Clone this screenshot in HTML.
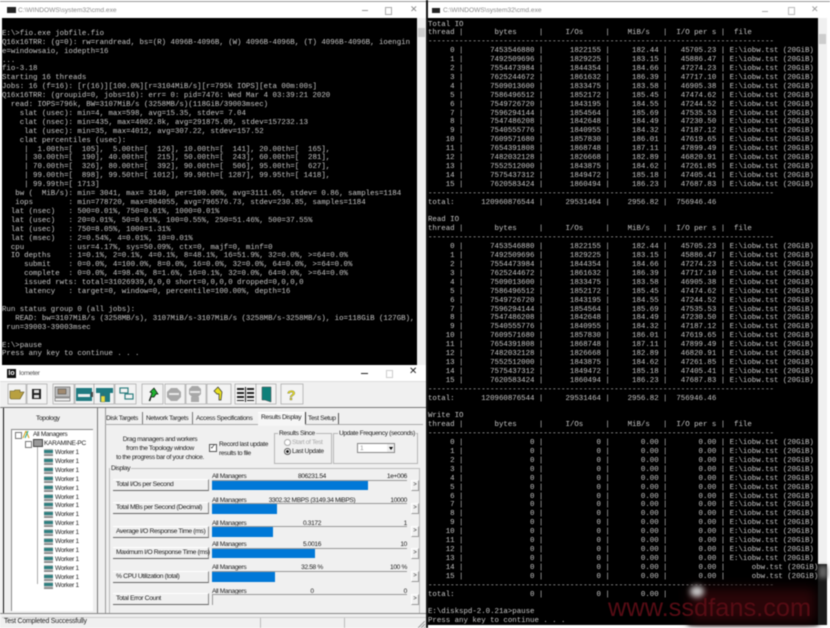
<!DOCTYPE html>
<html><head><meta charset="utf-8"><style>
html,body{margin:0;padding:0;background:#fff}
#w{position:relative;width:830px;height:628px;overflow:hidden;background:#fff;filter:blur(.4px);font-family:"Liberation Sans",sans-serif}
.a{position:absolute}
pre{position:absolute;margin:0;font:7.4px/8.9px "Liberation Mono",monospace;color:#c8c8c8;white-space:pre}
.t{position:absolute;font-size:7.2px;line-height:9px;color:#222;white-space:pre;letter-spacing:-.35px}
.btn{position:absolute;left:113px;width:96px;height:12px;padding-left:3px;background:#f0f0f0;border-bottom:1px solid #666;border-right:1px solid #888;border-top:1px solid #fff;box-sizing:border-box;font-size:6.8px;letter-spacing:-.38px;line-height:10px;color:#222;text-align:left;white-space:pre}
.bar{position:absolute;left:212px;width:195px;height:10px;background:#f0f0f0;border-top:1px solid #999;box-sizing:border-box}
.fill{position:absolute;left:212px;height:10px;background:#0078d7}
.sb{position:absolute;left:411px;width:8px;height:11px;background:#f0f0f0;border:1px solid #999;border-top-color:#fff;border-left-color:#fff;box-sizing:border-box;font-size:6px;line-height:9px;text-align:center;color:#333}
.ic{position:absolute;left:44px;width:9px;height:7px;background:linear-gradient(#bbb 0,#bbb 1px,#2f7f80 1px,#2f7f80 4px,#ccc 4px,#777 7px)}
.wk{position:absolute;left:55px;font-size:6.5px;letter-spacing:-.3px;line-height:9px;color:#222;white-space:pre}
.gb{position:absolute;border:1px solid #b5b5b5;box-sizing:border-box}
</style></head><body><div id="w">

<!-- left console -->
<div class="a" style="left:0;top:1px;width:426px;height:17px;background:#fff;border-top:1px solid #999"></div>
<div class="a" style="left:7px;top:7px;width:9px;height:6px;background:#222"></div>
<div class="t" style="left:18px;top:6px;color:#8a8a8a;font-size:6.6px;letter-spacing:0">C:\WINDOWS\system32\cmd.exe</div>
<div class="a" style="left:362px;top:10px;width:6px;height:1px;background:#999"></div>
<div class="a" style="left:385px;top:7px;width:5px;height:6px;border:1px solid #aaa"></div>
<div class="t" style="left:410px;top:5px;color:#888;font-size:9px">✕</div>
<div class="a" style="left:2px;top:18px;width:415px;height:347px;background:#000"></div>
<div class="a" style="left:417px;top:18px;width:9px;height:347px;background:#f0f0f0"></div>
<div class="a" style="left:418px;top:28px;width:7px;height:9px;background:#cdcdcd"></div>
<pre style="left:2px;top:29.8px">E:\&gt;fio.exe jobfile.fio
Q16x16TRR: (g=0): rw=randread, bs=(R) 4096B-4096B, (W) 4096B-4096B, (T) 4096B-4096B, ioengin
e=windowsaio, iodepth=16
...
fio-3.18
Starting 16 threads
Jobs: 16 (f=16): [r(16)][100.0%][r=3104MiB/s][r=795k IOPS][eta 00m:00s]
Q16x16TRR: (groupid=0, jobs=16): err= 0: pid=7476: Wed Mar 4 03:39:21 2020
  read: IOPS=796k, BW=3107MiB/s (3258MB/s)(118GiB/39003msec)
    slat (usec): min=4, max=598, avg=15.35, stdev= 7.04
    clat (nsec): min=435, max=4002.8k, avg=291875.09, stdev=157232.13
     lat (usec): min=35, max=4012, avg=307.22, stdev=157.52
    clat percentiles (usec):
     |  1.00th=[  105],  5.00th=[  126], 10.00th=[  141], 20.00th=[  165],
     | 30.00th=[  190], 40.00th=[  215], 50.00th=[  243], 60.00th=[  281],
     | 70.00th=[  326], 80.00th=[  392], 90.00th=[  506], 95.00th=[  627],
     | 99.00th=[  898], 99.50th=[ 1012], 99.90th=[ 1287], 99.95th=[ 1418],
     | 99.99th=[ 1713]
   bw (  MiB/s): min= 3041, max= 3140, per=100.00%, avg=3111.65, stdev= 0.86, samples=1184
   iops        : min=778720, max=804055, avg=796576.73, stdev=230.85, samples=1184
  lat (nsec)   : 500=0.01%, 750=0.01%, 1000=0.01%
  lat (usec)   : 20=0.01%, 50=0.01%, 100=0.55%, 250=51.46%, 500=37.55%
  lat (usec)   : 750=8.05%, 1000=1.31%
  lat (msec)   : 2=0.54%, 4=0.01%, 10=0.01%
  cpu          : usr=4.17%, sys=50.09%, ctx=0, majf=0, minf=0
  IO depths    : 1=0.1%, 2=0.1%, 4=0.1%, 8=48.1%, 16=51.9%, 32=0.0%, &gt;=64=0.0%
     submit    : 0=0.0%, 4=100.0%, 8=0.0%, 16=0.0%, 32=0.0%, 64=0.0%, &gt;=64=0.0%
     complete  : 0=0.0%, 4=98.4%, 8=1.6%, 16=0.1%, 32=0.0%, 64=0.0%, &gt;=64=0.0%
     issued rwts: total=31026939,0,0,0 short=0,0,0,0 dropped=0,0,0,0
     latency   : target=0, window=0, percentile=100.00%, depth=16

Run status group 0 (all jobs):
   READ: bw=3107MiB/s (3258MB/s), 3107MiB/s-3107MiB/s (3258MB/s-3258MB/s), io=118GiB (127GB),
 run=39003-39003msec

E:\&gt;pause
Press any key to continue . . .</pre>

<!-- gap -->
<div class="a" style="left:426px;top:0;width:2px;height:628px;background:#111"></div>

<!-- right console -->
<div class="a" style="left:428px;top:1px;width:402px;height:17px;background:#fff;border-top:1px solid #999"></div>
<div class="a" style="left:432px;top:8px;width:8px;height:5px;background:#222"></div>
<div class="t" style="left:443px;top:6px;color:#8a8a8a;font-size:6.6px;letter-spacing:0">C:\WINDOWS\system32\cmd.exe</div>
<div class="a" style="left:762px;top:11px;width:6px;height:1px;background:#aaa"></div>
<div class="a" style="left:788px;top:7px;width:5px;height:6px;border:1px solid #bbb"></div>
<div class="t" style="left:811px;top:5px;color:#999;font-size:9px">✕</div>
<div class="a" style="left:428px;top:18px;width:390px;height:607px;background:#000"></div>
<div class="a" style="left:818px;top:18px;width:9px;height:607px;background:#f0f0f0"></div>
<div class="a" style="left:819px;top:34px;width:7px;height:10px;background:#cdcdcd"></div>
<pre style="left:428px;top:20.5px">Total IO
thread |       bytes     |     I/Os     |    MiB/s   |  I/O per s |  file
------------------------------------------------------------------------------
     0 |      7453546880 |      1822155 |     182.44 |   45705.23 | E:\iobw.tst (20GiB)
     1 |      7492509696 |      1829225 |     183.15 |   45886.47 | E:\iobw.tst (20GiB)
     2 |      7554473984 |      1844354 |     184.66 |   47274.23 | E:\iobw.tst (20GiB)
     3 |      7625244672 |      1861632 |     186.39 |   47717.10 | E:\iobw.tst (20GiB)
     4 |      7509013600 |      1833475 |     183.58 |   46905.38 | E:\iobw.tst (20GiB)
     5 |      7586496512 |      1852172 |     185.45 |   47474.62 | E:\iobw.tst (20GiB)
     6 |      7549726720 |      1843195 |     184.55 |   47244.52 | E:\iobw.tst (20GiB)
     7 |      7596294144 |      1854564 |     185.69 |   47535.53 | E:\iobw.tst (20GiB)
     8 |      7547486208 |      1842648 |     184.49 |   47230.50 | E:\iobw.tst (20GiB)
     9 |      7540555776 |      1840955 |     184.32 |   47187.12 | E:\iobw.tst (20GiB)
    10 |      7609571680 |      1857830 |     186.01 |   47619.65 | E:\iobw.tst (20GiB)
    11 |      7654391808 |      1868748 |     187.11 |   47899.49 | E:\iobw.tst (20GiB)
    12 |      7482032128 |      1826668 |     182.89 |   46820.91 | E:\iobw.tst (20GiB)
    13 |      7552512000 |      1843875 |     184.62 |   47261.85 | E:\iobw.tst (20GiB)
    14 |      7575437312 |      1849472 |     185.18 |   47405.41 | E:\iobw.tst (20GiB)
    15 |      7620583424 |      1860494 |     186.23 |   47687.83 | E:\iobw.tst (20GiB)
------------------------------------------------------------------------------
total:      120960876544 |     29531464 |    2956.82 |  756946.46

Read IO
thread |       bytes     |     I/Os     |    MiB/s   |  I/O per s |  file
------------------------------------------------------------------------------
     0 |      7453546880 |      1822155 |     182.44 |   45705.23 | E:\iobw.tst (20GiB)
     1 |      7492509696 |      1829225 |     183.15 |   45886.47 | E:\iobw.tst (20GiB)
     2 |      7554473984 |      1844354 |     184.66 |   47274.23 | E:\iobw.tst (20GiB)
     3 |      7625244672 |      1861632 |     186.39 |   47717.10 | E:\iobw.tst (20GiB)
     4 |      7509013600 |      1833475 |     183.58 |   46905.38 | E:\iobw.tst (20GiB)
     5 |      7586496512 |      1852172 |     185.45 |   47474.62 | E:\iobw.tst (20GiB)
     6 |      7549726720 |      1843195 |     184.55 |   47244.52 | E:\iobw.tst (20GiB)
     7 |      7596294144 |      1854564 |     185.69 |   47535.53 | E:\iobw.tst (20GiB)
     8 |      7547486208 |      1842648 |     184.49 |   47230.50 | E:\iobw.tst (20GiB)
     9 |      7540555776 |      1840955 |     184.32 |   47187.12 | E:\iobw.tst (20GiB)
    10 |      7609571680 |      1857830 |     186.01 |   47619.65 | E:\iobw.tst (20GiB)
    11 |      7654391808 |      1868748 |     187.11 |   47899.49 | E:\iobw.tst (20GiB)
    12 |      7482032128 |      1826668 |     182.89 |   46820.91 | E:\iobw.tst (20GiB)
    13 |      7552512000 |      1843875 |     184.62 |   47261.85 | E:\iobw.tst (20GiB)
    14 |      7575437312 |      1849472 |     185.18 |   47405.41 | E:\iobw.tst (20GiB)
    15 |      7620583424 |      1860494 |     186.23 |   47687.83 | E:\iobw.tst (20GiB)
------------------------------------------------------------------------------
total:      120960876544 |     29531464 |    2956.82 |  756946.46

Write IO
thread |       bytes     |     I/Os     |    MiB/s   |  I/O per s |  file
------------------------------------------------------------------------------
     0 |               0 |            0 |       0.00 |       0.00 | E:\iobw.tst (20GiB)
     1 |               0 |            0 |       0.00 |       0.00 | E:\iobw.tst (20GiB)
     2 |               0 |            0 |       0.00 |       0.00 | E:\iobw.tst (20GiB)
     3 |               0 |            0 |       0.00 |       0.00 | E:\iobw.tst (20GiB)
     4 |               0 |            0 |       0.00 |       0.00 | E:\iobw.tst (20GiB)
     5 |               0 |            0 |       0.00 |       0.00 | E:\iobw.tst (20GiB)
     6 |               0 |            0 |       0.00 |       0.00 | E:\iobw.tst (20GiB)
     7 |               0 |            0 |       0.00 |       0.00 | E:\iobw.tst (20GiB)
     8 |               0 |            0 |       0.00 |       0.00 | E:\iobw.tst (20GiB)
     9 |               0 |            0 |       0.00 |       0.00 | E:\iobw.tst (20GiB)
    10 |               0 |            0 |       0.00 |       0.00 | E:\iobw.tst (20GiB)
    11 |               0 |            0 |       0.00 |       0.00 | E:\iobw.tst (20GiB)
    12 |               0 |            0 |       0.00 |       0.00 | E:\iobw.tst (20GiB)
    13 |               0 |            0 |       0.00 |       0.00 | E:\iobw.tst (20GiB)
    14 |               0 |            0 |       0.00 |       0.00 |      obw.tst (20GiB)
    15 |               0 |            0 |       0.00 |       0.00 |      obw.tst (20GiB)
------------------------------------------------------------------------------
total:                 0 |            0 |       0.00 |

E:\diskspd-2.0.21a&gt;pause
Press any key to continue . . .</pre>

<!-- watermark smudge -->
<div class="a" style="left:688px;top:586px;width:130px;height:39px;background:#000;filter:blur(2px)"></div>
<div class="a" style="left:690px;top:589px;width:125px;height:33px;background:#2a0508;filter:blur(6px)"></div>
<div class="a" style="left:690px;top:586px;width:14px;height:11px;background:#ccc;border-radius:50%;filter:blur(3px)"></div>
<div class="a" style="left:818px;top:564px;width:9px;height:61px;background:#1a1a1a"></div>
<div class="a" style="left:819px;top:566px;width:8px;height:12px;background:#666;filter:blur(2px)"></div>
<div class="a" style="left:608px;top:594px;font:25.4px/28px 'Liberation Sans',sans-serif;color:#560c14;white-space:pre">www.ssdfans.com</div>

<!-- Iometer -->
<div class="a" style="left:0;top:365px;width:426px;height:263px;background:#f0f0f0"></div>
<div class="a" style="left:0;top:365px;width:426px;height:17px;background:#fff"></div>
<div class="a" style="left:7px;top:369px;width:9px;height:9px;background:#111;color:#fff;font:bold 7px/9px 'Liberation Sans',sans-serif;text-align:center">Io</div>
<div class="t" style="left:19px;top:369px;color:#555;font-size:6.8px">Iometer</div>
<div class="a" style="left:361px;top:373px;width:7px;height:1px;background:#222"></div>
<div class="a" style="left:386px;top:370px;width:5px;height:6px;border:1px solid #ccc"></div>
<div class="t" style="left:409px;top:367px;color:#222;font-size:10px">✕</div>
<div class="a" style="left:0;top:381px;width:426px;height:1px;background:#ddd"></div>

<svg class="a" style="left:0;top:382px" width="426" height="26" viewBox="0 382 426 26">
<g fill="#f3f3f3" stroke="#999" stroke-width=".6">
<rect x="8" y="384" width="18" height="20"/><rect x="27" y="384" width="20" height="20"/><rect x="53" y="384" width="21" height="20"/><rect x="75" y="384" width="19" height="20"/><rect x="94" y="384" width="20" height="20"/><rect x="115" y="384" width="21" height="20"/><rect x="142" y="384" width="21" height="20"/><rect x="165" y="384" width="20" height="20"/><rect x="186" y="384" width="20" height="20"/><rect x="207" y="384" width="24" height="20"/><rect x="235" y="384" width="21" height="20"/><rect x="256" y="384" width="20" height="20"/><rect x="281" y="384" width="22" height="20"/></g>
<path d="M10 398V391h4l1-1h5v2h4l-4 7H11z" fill="#b8a040" stroke="#5a5020" stroke-width=".6"/>
<path d="M32 389h9v10h-9z" fill="#222"/><path d="M34 390h5v3h-5zM34 395h5v3h-5z" fill="#ddd"/>
<rect x="55" y="387" width="15" height="10" fill="#bbb" stroke="#666" stroke-width=".7"/><rect x="58" y="389" width="8" height="5" fill="#a08a70" stroke="#444" stroke-width=".5"/><rect x="55" y="398" width="15" height="3" fill="#eee" stroke="#555" stroke-width=".6"/>
<rect x="76" y="388" width="16" height="13" fill="#1f7a80"/><rect x="78" y="394" width="12" height="3" fill="#eee"/><rect x="91" y="392" width="2" height="5" fill="#444"/>
<rect x="96" y="388" width="17" height="5" fill="#1f7a80"/><rect x="100" y="393" width="10" height="9" fill="#1f7a80"/><path d="M103 393v3h-2v6h4v-6h-2" fill="#e8e040" stroke="#555" stroke-width=".4"/>
<g fill="none" stroke="#2f7f80" stroke-width="1.2"><rect x="120" y="388" width="8" height="5"/><rect x="125" y="394" width="8" height="5"/></g>
<path d="M149 401l3-8-2-1 4-4 4 6-2 0-2 3-3 0-1 4" fill="#1fb030" stroke="#111" stroke-width=".7"/>
<path d="M171 388h6l4 4v5l-4 4h-6l-4-4v-5z" fill="#a8a8a8"/><rect x="169" y="393" width="10" height="2" fill="#e8e8e8"/>
<path d="M192 386h6l3 3v5l-3 3h-6l-3-3v-5z" fill="#a8a8a8"/><rect x="190" y="391" width="10" height="2" fill="#e8e8e8"/><rect x="191" y="397" width="8" height="5" fill="#aaa"/>
<path d="M214 391l4-4 4 5-1 8h-2l0-6-2 0z" fill="#e8e020" stroke="#333" stroke-width=".7"/>
<g fill="#222"><rect x="237" y="388" width="7" height="2"/><rect x="237" y="392" width="7" height="2"/><rect x="237" y="396" width="7" height="2"/><rect x="237" y="400" width="7" height="1"/><rect x="247" y="388" width="7" height="2"/><rect x="247" y="392" width="7" height="2"/><rect x="247" y="396" width="7" height="2"/><rect x="247" y="400" width="7" height="1"/><rect x="245" y="387" width="1" height="15"/></g>
<path d="M262 387h9v15l-6-2h-3z" fill="#0e7f7a" stroke="#444" stroke-width=".5"/>
<text x="287" y="400" font-family="Liberation Sans" font-weight="bold" font-size="14" fill="#e8e020" stroke="#444" stroke-width=".3">?</text>
</svg>
<div class="a" style="left:0;top:407px;width:426px;height:1px;background:#777"></div>
<div class="a" style="left:3px;top:408px;width:1px;height:205px;background:#111"></div>
<div class="a" style="left:97px;top:408px;width:1px;height:205px;background:#777"></div>
<div class="a" style="left:105px;top:408px;width:1px;height:205px;background:#999"></div>
<div class="t" style="left:36px;top:414px;font-size:6.6px">Topology</div>

<!-- tree -->
<div class="a" style="left:11px;top:429px;width:82px;height:182px;background:#fff;border-left:1px solid #888;border-top:1px solid #888;box-sizing:border-box"></div>
<div class="a" style="left:15px;top:432px;width:5px;height:5px;border:1px solid #777"></div>
<svg class="a" style="left:22px;top:430px" width="10" height="9"><path d="M1 8L4 1M4 1L7 8" stroke="#d0a020" fill="none"/><path d="M3 8L6 1" stroke="#2a8" fill="none"/></svg>
<div class="wk" style="left:33px;top:430px">All Managers</div>
<div class="a" style="left:25px;top:441px;width:5px;height:5px;border:1px solid #777"></div>
<div class="a" style="left:33px;top:439px;width:8px;height:6px;background:#999;border:1px solid #444"></div>
<div class="wk" style="left:44px;top:439px">KARAMINE-PC</div>
<div class="a" style="left:37px;top:447px;width:1px;height:137px;background:#aaa"></div>
<div class="ic" style="top:449px"></div><div class="wk" style="top:448px">Worker 1</div>
<div class="ic" style="top:458px"></div><div class="wk" style="top:457px">Worker 1</div>
<div class="ic" style="top:467px"></div><div class="wk" style="top:466px">Worker 1</div>
<div class="ic" style="top:476px"></div><div class="wk" style="top:475px">Worker 1</div>
<div class="ic" style="top:485px"></div><div class="wk" style="top:484px">Worker 1</div>
<div class="ic" style="top:494px"></div><div class="wk" style="top:493px">Worker 1</div>
<div class="ic" style="top:502px"></div><div class="wk" style="top:501px">Worker 1</div>
<div class="ic" style="top:511px"></div><div class="wk" style="top:510px">Worker 1</div>
<div class="ic" style="top:520px"></div><div class="wk" style="top:519px">Worker 1</div>
<div class="ic" style="top:529px"></div><div class="wk" style="top:528px">Worker 1</div>
<div class="ic" style="top:538px"></div><div class="wk" style="top:537px">Worker 1</div>
<div class="ic" style="top:547px"></div><div class="wk" style="top:546px">Worker 1</div>
<div class="ic" style="top:556px"></div><div class="wk" style="top:555px">Worker 1</div>
<div class="ic" style="top:565px"></div><div class="wk" style="top:564px">Worker 1</div>
<div class="ic" style="top:574px"></div><div class="wk" style="top:573px">Worker 1</div>
<div class="ic" style="top:582px"></div><div class="wk" style="top:581px">Worker 1</div>

<!-- tabs -->
<div class="t" style="left:106px;top:414px;font-size:6.6px">Disk Targets</div>
<div class="a" style="left:142px;top:412px;width:1px;height:12px;background:#777"></div>
<div class="t" style="left:146px;top:414px;font-size:6.6px">Network Targets</div>
<div class="a" style="left:192px;top:412px;width:1px;height:12px;background:#777"></div>
<div class="t" style="left:196px;top:414px;font-size:6.6px">Access Specifications</div>
<div class="a" style="left:258px;top:412px;width:47px;height:13px;background:#f6f6f6;border-top:1px solid #fff"></div>
<div class="t" style="left:261px;top:413px;font-size:6.6px">Results Display</div>
<div class="a" style="left:305px;top:412px;width:1px;height:12px;background:#333"></div>
<div class="t" style="left:308px;top:414px;font-size:6.6px">Test Setup</div>
<div class="a" style="left:338px;top:413px;width:1px;height:11px;background:#555"></div>
<div class="a" style="left:105px;top:424px;width:153px;height:1px;background:#aaa"></div>
<div class="a" style="left:305px;top:424px;width:118px;height:1px;background:#aaa"></div>

<div class="t" style="left:112px;top:435px;width:96px;text-align:center;font-size:6.6px">Drag managers and workers
from the Topology window
to the progress bar of your choice.</div>
<div class="a" style="left:209px;top:444px;width:6px;height:6px;background:#fff;border:1px solid #555"></div>
<div class="t" style="left:210px;top:443px;font-size:7px">✓</div>
<div class="t" style="left:219px;top:440px;font-size:6.6px">Record last update
results to file</div>
<div class="gb" style="left:274px;top:433px;width:58px;height:31px"></div>
<div class="t" style="left:278px;top:429px;background:#f0f0f0;font-size:6.6px;padding:0 1px">Results Since</div>
<div class="a" style="left:284px;top:439px;width:5px;height:5px;border:1px solid #aaa;border-radius:50%;background:#fff"></div>
<div class="t" style="left:292px;top:438px;color:#aaa;font-size:6.6px">Start of Test</div>
<div class="a" style="left:284px;top:448px;width:5px;height:5px;border:1px solid #555;border-radius:50%;background:radial-gradient(#111 35%,#fff 45%)"></div>
<div class="t" style="left:292px;top:447px;font-size:6.6px">Last Update</div>
<div class="gb" style="left:333px;top:433px;width:85px;height:31px"></div>
<div class="t" style="left:338px;top:429px;background:#f0f0f0;font-size:6.6px;padding:0 1px">Update Frequency (seconds)</div>
<div class="a" style="left:357px;top:443px;width:38px;height:10px;background:#fff;border:1px solid #888;box-sizing:border-box"></div>
<div class="t" style="left:360px;top:444px;color:#999;font-size:6.6px">1</div>
<div class="a" style="left:387px;top:444px;width:7px;height:8px;background:#eee"></div>
<div class="a" style="left:389px;top:447px;width:0;height:0;border:2px solid transparent;border-top:3px solid #000"></div>

<!-- display -->
<div class="a" style="left:109px;top:468px;width:311px;height:145px;border:1px solid #bbb;border-bottom:0;box-sizing:border-box"></div>
<div class="t" style="left:110px;top:464px;background:#f0f0f0;font-size:6.6px;padding:0 1px">Display</div>

<div class="btn" style="top:479px">Total I/Os per Second</div>
<div class="btn" style="top:502px">Total MBs per Second (Decimal)</div>
<div class="btn" style="top:526px">Average I/O Response Time (ms)</div>
<div class="btn" style="top:547px">Maximum I/O Response Time (ms)</div>
<div class="btn" style="top:571px">% CPU Utilization (total)</div>
<div class="btn" style="top:593px">Total Error Count</div>

<div class="t" style="left:212px;top:472px;font-size:6.6px">All Managers</div>
<div class="t" style="left:212px;top:496px;font-size:6.6px">All Managers</div>
<div class="t" style="left:212px;top:519px;font-size:6.6px">All Managers</div>
<div class="t" style="left:212px;top:540px;font-size:6.6px">All Managers</div>
<div class="t" style="left:212px;top:563px;font-size:6.6px">All Managers</div>
<div class="t" style="left:212px;top:587px;font-size:6.6px">All Managers</div>

<div class="t" style="left:262px;width:100px;text-align:center;top:472px;font-size:6.6px">806231.54</div>
<div class="t" style="left:262px;width:100px;text-align:center;top:496px;font-size:6.6px">3302.32 MBPS (3149.34 MiBPS)</div>
<div class="t" style="left:262px;width:100px;text-align:center;top:519px;font-size:6.6px">0.3172</div>
<div class="t" style="left:262px;width:100px;text-align:center;top:540px;font-size:6.6px">5.0016</div>
<div class="t" style="left:262px;width:100px;text-align:center;top:563px;font-size:6.6px">32.58 %</div>
<div class="t" style="left:262px;width:100px;text-align:center;top:587px;font-size:6.6px">0</div>

<div class="t" style="left:367px;width:40px;text-align:right;top:472px;font-size:6.6px">1e+006</div>
<div class="t" style="left:367px;width:40px;text-align:right;top:496px;font-size:6.6px">10000</div>
<div class="t" style="left:367px;width:40px;text-align:right;top:519px;font-size:6.6px">1</div>
<div class="t" style="left:367px;width:40px;text-align:right;top:540px;font-size:6.6px">10</div>
<div class="t" style="left:367px;width:40px;text-align:right;top:563px;font-size:6.6px">100 %</div>
<div class="t" style="left:367px;width:40px;text-align:right;top:587px;font-size:6.6px">0</div>

<div class="bar" style="top:480px"></div><div class="fill" style="top:481px;width:156px;height:9px"></div>
<div class="bar" style="top:503px"></div><div class="fill" style="top:504px;width:65px"></div>
<div class="bar" style="top:526px"></div><div class="fill" style="top:527px;width:61px"></div>
<div class="bar" style="top:548px"></div><div class="fill" style="top:549px;width:103px;height:9px"></div>
<div class="bar" style="top:571px"></div><div class="fill" style="top:572px;width:63px"></div>
<div class="bar" style="top:594px;height:11px;border-left:1px solid #999"></div>

<div class="sb" style="top:480px">&gt;</div>
<div class="sb" style="top:503px">&gt;</div>
<div class="sb" style="top:526px">&gt;</div>
<div class="sb" style="top:548px">&gt;</div>
<div class="sb" style="top:571px">&gt;</div>
<div class="sb" style="top:594px">&gt;</div>

<!-- status -->
<div class="a" style="left:0;top:613px;width:426px;height:1px;background:#888"></div>
<div class="a" style="left:2px;top:617px;width:424px;height:1px;background:#ccc"></div>
<div class="t" style="left:4px;top:617px;font-size:6.9px;letter-spacing:-.2px">Test Completed Successfully</div>
<div class="a" style="left:260px;top:618px;width:1px;height:10px;background:#bbb"></div>
<div class="a" style="left:344px;top:618px;width:1px;height:10px;background:#bbb"></div>
<svg class="a" style="left:418px;top:621px" width="7" height="7"><path d="M0 7L7 0M3 7L7 3M6 7L7 6" stroke="#999"/></svg>
</div></body></html>
